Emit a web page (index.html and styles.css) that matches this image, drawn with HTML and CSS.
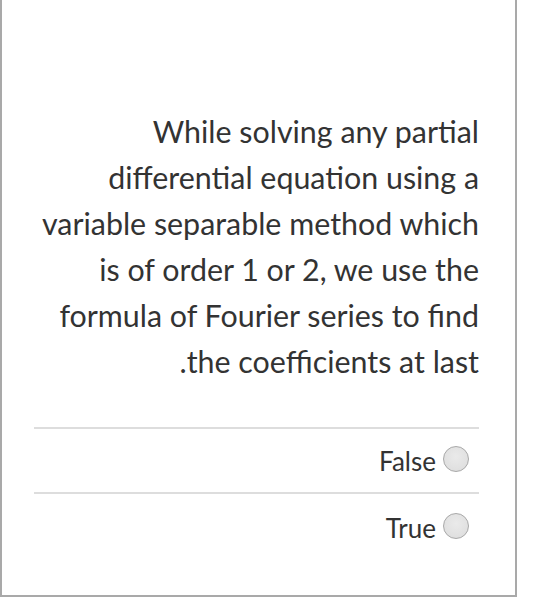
FILE: index.html
```html
<!DOCTYPE html>
<html lang="en">
<head>
<meta charset="utf-8">
<link rel="stylesheet" href="styles.css">
</head>
<body>
<div class="card">
  <p class="question" dir="rtl">While solving any partial differential equation using a variable separable method which is of order 1 or 2, we use the formula of Fourier series to find the coefficients at last.</p>
  <div class="options" dir="rtl">
    <label class="option"><span class="radio"></span><span class="text">False</span></label>
    <label class="option"><span class="radio"></span><span class="text">True</span></label>
  </div>
</div>
</body>
</html>
```

FILE: styles.css
```css
html, body {
  margin: 0;
  padding: 0;
  background: #ffffff;
}
body {
  font-family: Lato, "Open Sans", sans-serif;
  color: #333333;
}
.card {
  box-sizing: border-box;
  width: 517px;
  height: 597px;
  border: 2px solid #a9a9a9;
  border-top: none;
  padding: 108px 36px 0 32px;
}
.question {
  margin: 0;
  font-size: 30.4px;
  line-height: 46px;
  text-align: right;
}
.options {
  margin-top: 43px;
}
.option {
  display: flex;
  align-items: center;
  gap: 7px;
  border-top: 2px solid #dddddd;
  padding: 17px 10px 20px 0;
  height: 26px;
  font-size: 26px;
  line-height: 26px;
}
.option + .option {
  padding-top: 19px;
}
.text {
  position: relative;
  top: 2px;
}
.radio {
  box-sizing: border-box;
  width: 26px;
  height: 26px;
  border-radius: 50%;
  border: 1px solid #a8a8a8;
  background: radial-gradient(circle at 50% 40%, #eaeaea 0%, #e0e0e0 70%, #d4d4d4 100%);
  flex: none;
}
```
